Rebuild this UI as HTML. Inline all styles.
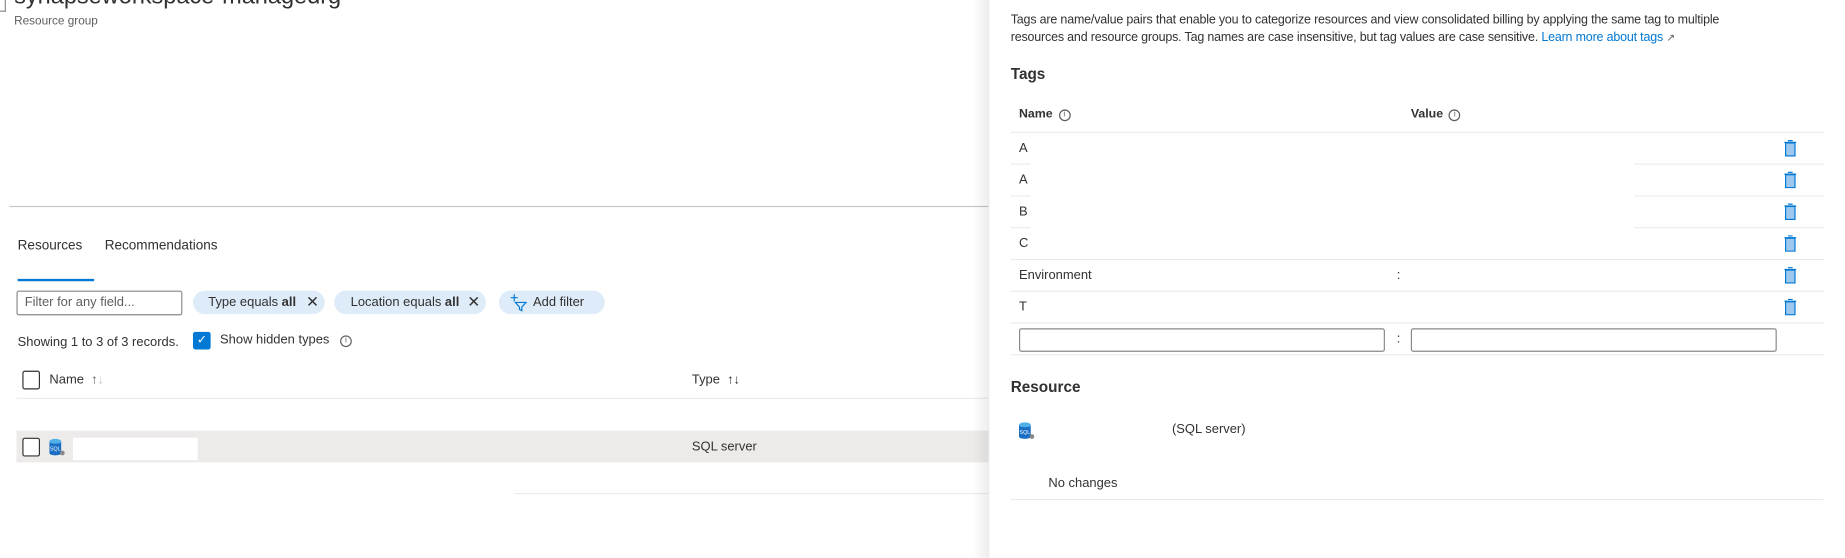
<!DOCTYPE html>
<html><head><meta charset="utf-8"><style>
html,body{margin:0;padding:0;width:1845px;height:557px;overflow:hidden;background:#fff}
#s{position:absolute;left:0;top:0;width:1568px;height:474px;transform:scale(1.17666);transform-origin:0 0;font-family:"Liberation Sans",sans-serif;color:#323130;font-size:11px}
.a{position:absolute;white-space:nowrap}
.ln{position:absolute;height:1px;background:#edebe9}
.cb{position:absolute;width:13px;height:14px;border:1px solid #323130;border-radius:2px;background:#fff}
.pill{position:absolute;top:247px;height:20px;border-radius:10px;background:#deecf9;font-size:11px;line-height:20px}
.tr{position:absolute;left:1516px;width:11px;height:15px}
.in{position:absolute;height:18px;border:1px solid #8a8886;border-radius:2px;background:#fff}
.info{display:inline-block;width:8px;height:8px;border:1px solid #605e5c;border-radius:50%;font-size:7px;line-height:8px;text-align:center;vertical-align:1px;margin-left:2px;color:#605e5c}
</style></head><body><div id="s">
<div class="a" style="left:0;top:-2px;width:4px;height:11px;border:1px solid #8a8886;border-top:none;border-left:none"></div>
<div class="a" style="left:12px;top:-14px;font-size:20px;color:#323130">synapseworkspace-managedrg</div>
<div class="a" style="left:12px;top:13px;font-size:10px;color:#605e5c">Resource group</div>
<div class="a" style="left:8px;top:175px;width:832px;height:1px;background:#c8c6c4"></div>
<div class="a" style="left:15px;top:203px;font-size:11.5px">Resources</div>
<div class="a" style="left:15px;top:237px;width:65px;height:2px;background:#0078d4"></div>
<div class="a" style="left:89px;top:203px;font-size:11.5px">Recommendations</div>
<div class="a" style="left:14px;top:247px;width:139px;height:19px;border:1px solid #8a8886;border-radius:2px"></div>
<div class="a" style="left:21px;top:251px;font-size:11px;color:#605e5c">Filter for any field...</div>
<div class="pill" style="left:164px;width:112px"><span style="margin-left:13px">Type equals <b>all</b></span><span style="position:absolute;right:5px;font-size:13px;color:#323130">✕</span></div>
<div class="pill" style="left:284px;width:129px"><span style="margin-left:14px">Location equals <b>all</b></span><span style="position:absolute;right:5px;font-size:13px">✕</span></div>
<div class="pill" style="left:424px;width:90px"><svg style="position:absolute;left:9px;top:3px" width="15" height="15" viewBox="0 0 15 15"><path d="M1 3h6M4 0v6" stroke="#0078d4" fill="none"/><path d="M5 7h9l-3.5 4v3l-2-1v-2z" stroke="#0078d4" fill="none"/></svg><span style="margin-left:29px">Add filter</span></div>
<div class="a" style="left:15px;top:285px">Showing 1 to 3 of 3 records.</div>
<div class="a" style="left:164px;top:282px;width:15px;height:15px;background:#0078d4;border-radius:2px;color:#fff;font-size:10px;text-align:center;line-height:15px">✓</div>
<div class="a" style="left:187px;top:283px">Show hidden types <span class="info" style="margin-left:6px">i</span></div>
<div class="cb" style="left:19px;top:315px"></div>
<div class="a" style="left:42px;top:317px;font-size:11px">Name <span style="color:#605e5c;margin-left:3px">↑<span style="color:#c8c6c4">↓</span></span></div>
<div class="a" style="left:588px;top:317px">Type <span style="margin-left:3px">↑↓</span></div>
<div class="ln" style="left:14px;top:338px;width:826px"></div>
<div class="a" style="left:14px;top:366px;width:826px;height:27px;background:#edebe9"></div>
<div class="cb" style="left:19px;top:372px"></div>
<svg class="a" style="left:41px;top:372px" width="15" height="16" viewBox="0 0 15 16"><ellipse cx="6" cy="3" rx="5" ry="2" fill="#50b0e8"/><path d="M1 3v10c0 1.2 2.2 2 5 2s5-.8 5-2V3c0 1.2-2.2 2-5 2S1 4.2 1 3z" fill="#1a6fc4"/><text x="1.5" y="11" font-size="4.5" fill="#fff" font-family="Liberation Sans">SQL</text><circle cx="12" cy="13" r="2" fill="#888"/></svg>
<div class="a" style="left:62px;top:372px;width:106px;height:19px;background:#fff"></div>
<div class="a" style="left:588px;top:374px">SQL server</div>
<div class="ln" style="left:437px;top:419px;width:403px"></div>
<!-- panel -->
<div class="a" style="left:826px;top:0;width:15px;height:474px;background:linear-gradient(90deg,rgba(0,0,0,0),rgba(0,0,0,.07))"></div>
<div class="a" style="left:841px;top:0;width:727px;height:474px;background:#fff"></div>
<div class="a" style="left:859px;top:10px;font-size:10.6px;line-height:15px;white-space:normal;width:620px;letter-spacing:-.15px">Tags are name/value pairs that enable you to categorize resources and view consolidated billing by applying the same tag to multiple resources and resource groups. Tag names are case insensitive, but tag values are case sensitive. <span style="color:#0078d4">Learn more about tags</span> <span style="color:#605e5c;font-size:9px">↗</span></div>
<div class="a" style="left:859px;top:55px;font-size:13px;font-weight:bold">Tags</div>
<div class="a" style="left:866px;top:91px;font-weight:bold;font-size:10.5px">Name <span class="info" style="font-weight:normal">i</span></div>
<div class="a" style="left:1199px;top:91px;font-weight:bold;font-size:10.5px">Value <span class="info" style="font-weight:normal">i</span></div>
<div class="ln" style="left:859px;top:112px;width:691px"></div>
<div class="a" style="left:866px;top:120px">A</div><div class="ln" style="left:859px;top:139px;width:17px"></div><div class="ln" style="left:1389px;top:139px;width:161px"></div>
<div class="a" style="left:866px;top:147px">A</div><div class="ln" style="left:859px;top:166px;width:17px"></div><div class="ln" style="left:1389px;top:166px;width:161px"></div>
<div class="a" style="left:866px;top:174px">B</div><div class="ln" style="left:859px;top:193px;width:17px"></div><div class="ln" style="left:1389px;top:193px;width:161px"></div>
<div class="a" style="left:866px;top:201px">C</div><div class="ln" style="left:859px;top:220px;width:691px"></div>
<div class="a" style="left:866px;top:228px">Environment</div><div class="a" style="left:1187px;top:228px">:</div><div class="ln" style="left:859px;top:247px;width:691px"></div>
<div class="a" style="left:866px;top:255px">T</div><div class="ln" style="left:859px;top:274px;width:691px"></div>
<svg class="tr" style="top:118px" viewBox="0 0 11 15"><path d="M3.5 1.5h4M0.5 3h10" stroke="#0078d4" fill="none"/><rect x="1.5" y="3.5" width="8" height="11" fill="#9cc8ef" stroke="#0078d4"/></svg>
<svg class="tr" style="top:145px" viewBox="0 0 11 15"><path d="M3.5 1.5h4M0.5 3h10" stroke="#0078d4" fill="none"/><rect x="1.5" y="3.5" width="8" height="11" fill="#9cc8ef" stroke="#0078d4"/></svg>
<svg class="tr" style="top:172px" viewBox="0 0 11 15"><path d="M3.5 1.5h4M0.5 3h10" stroke="#0078d4" fill="none"/><rect x="1.5" y="3.5" width="8" height="11" fill="#9cc8ef" stroke="#0078d4"/></svg>
<svg class="tr" style="top:199px" viewBox="0 0 11 15"><path d="M3.5 1.5h4M0.5 3h10" stroke="#0078d4" fill="none"/><rect x="1.5" y="3.5" width="8" height="11" fill="#9cc8ef" stroke="#0078d4"/></svg>
<svg class="tr" style="top:226px" viewBox="0 0 11 15"><path d="M3.5 1.5h4M0.5 3h10" stroke="#0078d4" fill="none"/><rect x="1.5" y="3.5" width="8" height="11" fill="#9cc8ef" stroke="#0078d4"/></svg>
<svg class="tr" style="top:253px" viewBox="0 0 11 15"><path d="M3.5 1.5h4M0.5 3h10" stroke="#0078d4" fill="none"/><rect x="1.5" y="3.5" width="8" height="11" fill="#9cc8ef" stroke="#0078d4"/></svg>
<div class="in" style="left:866px;top:279px;width:309px"></div>
<div class="a" style="left:1187px;top:282px">:</div>
<div class="in" style="left:1199px;top:279px;width:309px"></div>
<div class="ln" style="left:859px;top:301px;width:691px"></div>
<div class="a" style="left:859px;top:321px;font-size:13px;font-weight:bold">Resource</div>
<svg class="a" style="left:865px;top:358px" width="15" height="16" viewBox="0 0 15 16"><ellipse cx="6" cy="3" rx="5" ry="2" fill="#50b0e8"/><path d="M1 3v10c0 1.2 2.2 2 5 2s5-.8 5-2V3c0 1.2-2.2 2-5 2S1 4.2 1 3z" fill="#1a6fc4"/><text x="1.5" y="11" font-size="4.5" fill="#fff" font-family="Liberation Sans">SQL</text><circle cx="12" cy="13" r="2" fill="#888"/></svg>
<div class="a" style="left:996px;top:359px">(SQL server)</div>
<div class="a" style="left:891px;top:405px">No changes</div>
<div class="ln" style="left:859px;top:424px;width:691px"></div>
</div></body></html>
